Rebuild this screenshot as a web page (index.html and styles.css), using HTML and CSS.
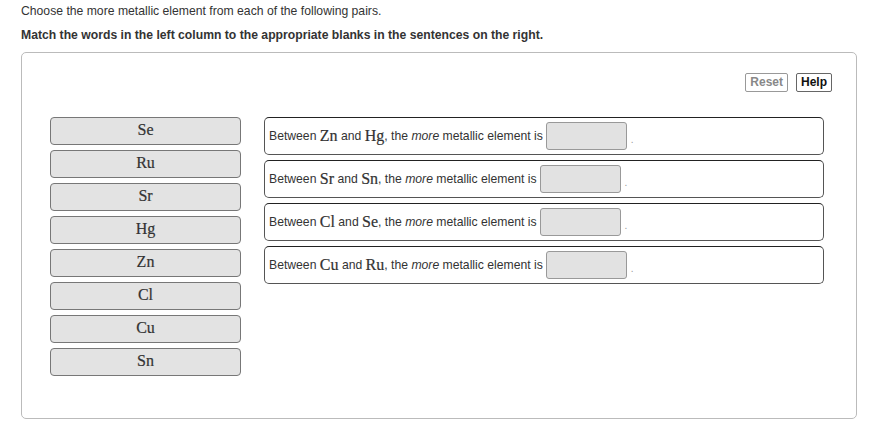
FILE: index.html
```html
<!DOCTYPE html>
<html lang="en">
<head>
  <meta charset="UTF-8">
  <title>Metallic Character Matching</title>
  <link rel="stylesheet" href="styles.css">
</head>
<body>
  <p class="prompt">Choose the more metallic element from each of the following pairs.</p>
  <p class="task">Match the words in the left column to the appropriate blanks in the sentences on the right.</p>

  <div class="panel">
    <div class="toolbar">
      <button class="btn reset">Reset</button>
      <button class="btn help">Help</button>
    </div>

    <div class="match">
      <!-- word bank -->
      <ul class="bank">
        <li class="tile">Se</li>
        <li class="tile">Ru</li>
        <li class="tile">Sr</li>
        <li class="tile">Hg</li>
        <li class="tile">Zn</li>
        <li class="tile">Cl</li>
        <li class="tile">Cu</li>
        <li class="tile">Sn</li>
      </ul>

      <!-- sentences with blanks -->
      <div class="sentences">
        <div class="sentence">
          Between&nbsp;<span class="el">Zn</span>&nbsp;and&nbsp;<span class="el">Hg</span>, the&nbsp;<em>more</em>&nbsp;metallic element is
          <span class="blank"></span><span class="dot">.</span>
        </div>
        <div class="sentence">
          Between&nbsp;<span class="el">Sr</span>&nbsp;and&nbsp;<span class="el">Sn</span>, the&nbsp;<em>more</em>&nbsp;metallic element is
          <span class="blank"></span><span class="dot">.</span>
        </div>
        <div class="sentence">
          Between&nbsp;<span class="el">Cl</span>&nbsp;and&nbsp;<span class="el">Se</span>, the&nbsp;<em>more</em>&nbsp;metallic element is
          <span class="blank"></span><span class="dot">.</span>
        </div>
        <div class="sentence">
          Between&nbsp;<span class="el">Cu</span>&nbsp;and&nbsp;<span class="el">Ru</span>, the&nbsp;<em>more</em>&nbsp;metallic element is
          <span class="blank"></span><span class="dot">.</span>
        </div>
      </div>
    </div>
  </div>
</body>
</html>
```

FILE: styles.css
```css
/* Global */
* {
  box-sizing: border-box;
}
body {
  margin: 0;
  padding: 3px 21px 0;
  background: #fff;
  font-family: Arial, "Liberation Sans", sans-serif;
  font-size: 12.2px;
  color: #333;
}
.prompt,
.task {
  margin: 0;
  line-height: 16px;
}
.task {
  margin-top: 8px;
  font-weight: bold;
}

/* Panel */
.panel {
  margin-top: 9px;
  width: 836px;
  height: 367px;
  border: 1px solid #bbb;
  border-radius: 5px;
  padding: 20px 24px 0 28px;
}
.toolbar {
  display: flex;
  justify-content: flex-end;
  gap: 8px;
}
.btn {
  height: 19px;
  padding: 0 4px;
  font-family: Arial, "Liberation Sans", sans-serif;
  font-size: 12px;
  font-weight: bold;
  background: #fff;
  border-radius: 2px;
  line-height: 17px;
}
.reset {
  color: #888;
  border: 1px solid #999;
}
.help {
  color: #111;
  border: 1px solid #666;
}

/* Matching area */
.match {
  display: flex;
  align-items: flex-start;
  gap: 23px;
  margin-top: 25px;
}
.bank {
  list-style: none;
  margin: 0;
  padding: 0;
  width: 191px;
  display: flex;
  flex-direction: column;
  gap: 5px;
}
.tile {
  height: 28px;
  background: #e3e3e3;
  border: 1px solid #777;
  border-radius: 4px;
  text-align: center;
  font-family: "Liberation Serif", "Times New Roman", serif;
  font-size: 16px;
  line-height: 24px;
  color: #333;
  -webkit-text-stroke: 0.2px #333;
}
.sentences {
  width: 560px;
  display: flex;
  flex-direction: column;
  gap: 5px;
}
.sentence {
  height: 38px;
  display: flex;
  align-items: center;
  padding-left: 4px;
  border: 1px solid #555;
  border-top-color: #222;
  border-radius: 5px;
  white-space: nowrap;
}
.sentence .el {
  font-family: "Liberation Serif", "Times New Roman", serif;
  font-size: 16px;
  -webkit-text-stroke: 0.2px #333;
}
.blank {
  display: inline-block;
  width: 81px;
  height: 28px;
  margin-left: 3px;
  background: #e2e2e2;
  border: 1px solid #999;
  border-radius: 3px;
}
.dot {
  margin: 6px 0 0 4px;
  color: #999;
  font-size: 10px;
}
```
